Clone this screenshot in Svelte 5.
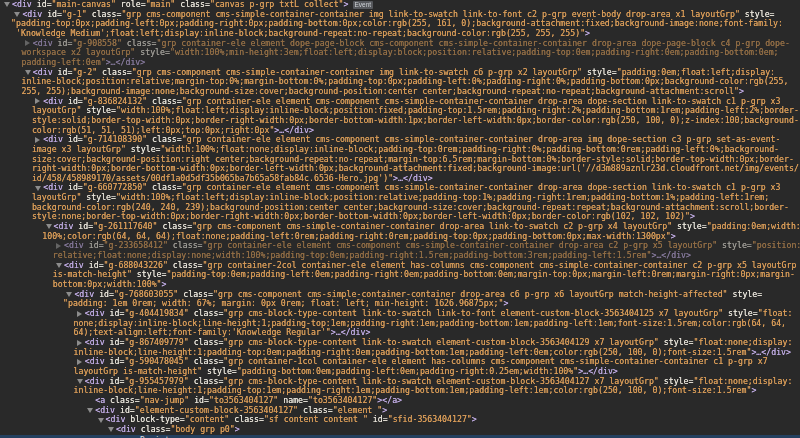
<script>
	// elements panel: each node is depth, arrow state and its wrapped lines
	const nodes = [
		{ d: 0, arrow: 'open', badge: 'Event', lines: [`<div id="main-canvas" role="main" class="canvas p-grp txtL collect">`] },
		{ d: 1, arrow: 'open', lines: [
			`<div id="g-1" class="grp cms-component cms-simple-container-container img link-to-swatch link-to-font c2 p-grp event-body drop-area x1 layoutGrp" style=`,
			`"padding-top:0px;padding-left:0px;padding-right:0px;padding-bottom:0px;color:rgb(255, 161, 0);background-attachment:fixed;background-image:none;font-family:`,
			` 'Knowledge Medium';float:left;display:inline-block;background-repeat:no-repeat;background-color:rgb(255, 255, 255)">`
		] },
		{ d: 2, arrow: 'closed', dim: true, lines: [
			`<div id="g-908558" class="grp container-ele element dope-page-block cms-component cms-simple-container-container drop-area dope-page-block c4 p-grp dope-`,
			`workspace x2 layoutGrp" style="width:100%;min-height:3em;float:left;display:block;position:relative;padding-top:0em;padding-right:0em;padding-bottom:0em;`,
			`padding-left:0em">…</div>`
		] },
		{ d: 2, arrow: 'open', lines: [
			`<div id="g-2" class="grp cms-component cms-simple-container-container img link-to-swatch c6 p-grp x2 layoutGrp" style="padding:0em;float:left;display:`,
			`inline-block;position:relative;margin-top:0%;margin-bottom:0%;padding-top:0px;padding-left:0%;padding-right:0%;padding-bottom:0px;background-color:rgb(255,`,
			`255, 255);background-image:none;background-size:cover;background-position:center center;background-repeat:no-repeat;background-attachment:scroll">`
		] },
		{ d: 3, arrow: 'closed', lines: [
			`<div id="g-836824132" class="grp container-ele element cms-component cms-simple-container-container drop-area dope-section link-to-swatch c1 p-grp x3`,
			`layoutGrp" style="width:100%;float:left;display:inline-block;position:fixed;padding-top:1.5rem;padding-right:2%;padding-bottom:1rem;padding-left:2%;border-`,
			`style:solid;border-top-width:0px;border-right-width:0px;border-bottom-width:1px;border-left-width:0px;border-color:rgb(250, 100, 0);z-index:100;background-`,
			`color:rgb(51, 51, 51);left:0px;top:0px;right:0px">…</div>`
		] },
		{ d: 3, arrow: 'closed', lines: [
			`<div id="g-714108390" class="grp container-ele element cms-component cms-simple-container-container drop-area img dope-section c3 p-grp set-as-event-`,
			`image x3 layoutGrp" style="width:100%;float:none;display:inline-block;padding-top:0rem;padding-right:0%;padding-bottom:0rem;padding-left:0%;background-`,
			`size:cover;background-position:right center;background-repeat:no-repeat;margin-top:6.5rem;margin-bottom:0%;border-style:solid;border-top-width:0px;border-`,
			`right-width:0px;border-bottom-width:0px;border-left-width:0px;background-attachment:fixed;background-image:url('//d3m889aznlr23d.cloudfront.net/img/events/`,
			`id/458/458989170/assets/00df1a0d5df35b065ba7b65a58fab84c.6536-Hero.jpg')">…</div>`
		] },
		{ d: 3, arrow: 'open', lines: [
			`<div id="g-660772850" class="grp container-ele element cms-component cms-simple-container-container drop-area dope-section link-to-swatch c1 p-grp x3`,
			`layoutGrp" style="width:100%;float:left;display:inline-block;position:relative;padding-top:1%;padding-right:1rem;padding-bottom:1%;padding-left:1rem;`,
			`background-color:rgb(240, 240, 239);background-position:center center;background-size:cover;background-repeat:repeat;background-attachment:scroll;border-`,
			`style:none;border-top-width:0px;border-right-width:0px;border-bottom-width:0px;border-left-width:0px;border-color:rgb(102, 102, 102)">`
		] },
		{ d: 4, arrow: 'open', lines: [
			`<div id="g-261117640" class="grp cms-component cms-simple-container-container drop-area link-to-swatch c2 p-grp x4 layoutGrp" style="padding:0em;width:`,
			`100%;color:rgb(64, 64, 64);float:none;padding-left:0rem;padding-right:0rem;padding-top:0px;padding-bottom:0px;max-width:1300px">`
		] },
		{ d: 5, arrow: 'closed', dim: true, lines: [
			`<div id="g-233658412" class="grp container-ele element cms-component cms-simple-container-container drop-area c2 p-grp x5 layoutGrp" style="position:`,
			`relative;float:none;display:none;width:100%;padding-top:0em;padding-right:1.5rem;padding-bottom:3rem;padding-left:1.5rem">…</div>`
		] },
		{ d: 5, arrow: 'open', lines: [
			`<div id="g-688043226" class="grp container-2col container-ele element has-columns cms-component cms-simple-container-container c2 p-grp x5 layoutGrp`,
			`is-match-height" style="padding-top:0em;padding-left:0em;padding-right:0em;padding-bottom:0em;margin-top:0px;margin-left:0rem;margin-right:0px;margin-`,
			`bottom:0px;width:100%">`
		] },
		{ d: 6, arrow: 'open', lines: [
			`<div id="g-768603055" class="grp cms-component cms-simple-container-container drop-area c6 p-grp x6 layoutGrp match-height-affected" style=`,
			`"padding: 1em 0rem; width: 67%; margin: 0px 0rem; float: left; min-height: 1626.96875px;">`
		] },
		{ d: 7, arrow: 'closed', lines: [
			`<div id="g-404419834" class="grp cms-block-type-content link-to-swatch link-to-font element-custom-block-3563404125 x7 layoutGrp" style="float:`,
			`none;display:inline-block;line-height:1;padding-top:1em;padding-right:1em;padding-bottom:1em;padding-left:1em;font-size:1.5rem;color:rgb(64, 64,`,
			`64);text-align:left;font-family:'Knowledge Regular'">…</div>`
		] },
		{ d: 7, arrow: 'closed', lines: [
			`<div id="g-867409779" class="grp cms-block-type-content link-to-swatch element-custom-block-3563404129 x7 layoutGrp" style="float:none;display:`,
			`inline-block;line-height:1;padding-top:0em;padding-right:0em;padding-bottom:1em;padding-left:0em;color:rgb(250, 100, 0);font-size:1.5rem">…</div>`
		] },
		{ d: 7, arrow: 'closed', lines: [
			`<div id="g-590478045" class="grp container-1col container-ele element has-columns cms-component cms-simple-container-container c1 p-grp x7`,
			`layoutGrp is-match-height" style="padding-bottom:0em;padding-left:0em;padding-right:0.25em;width:100%">…</div>`
		] },
		{ d: 7, arrow: 'open', lines: [
			`<div id="g-955457979" class="grp cms-block-type-content link-to-swatch element-custom-block-3563404127 x7 layoutGrp" style="float:none;display:`,
			`inline-block;line-height:1;padding-top:1em;padding-right:1em;padding-bottom:1em;padding-left:1em;color:rgb(250, 100, 0);font-size:1.5rem">`
		] },
		{ d: 8, lines: [`<a class="nav-jump" id="to3563404127" name="to3563404127"></a>`] },
		{ d: 8, arrow: 'open', lines: [`<div id="element-custom-block-3563404127" class="element ">`] },
		{ d: 9, arrow: 'open', lines: [`<div block-type="content" class="sf content content " id="sfid-3563404127">`] },
		{ d: 10, arrow: 'open', lines: [`<div class="body grp p0">`] }
	];

	const START = 12;
	const STEP = 10.4;
	const HANG = 11.3;

	// splits a node's lines into coloured pieces, quotes can run over several lines
	function tokenize(lines) {
		let inValue = false;
		return lines.map((line) => {
			const parts = [];
			let buf = '';
			let kind = inValue ? 'val' : 'attr';
			const flush = () => {
				if (buf) parts.push({ kind, text: buf });
				buf = '';
			};
			let i = 0;
			while (i < line.length) {
				const c = line[i];
				if (inValue) {
					kind = 'val';
					buf += c;
					if (c === '"') {
						flush();
						inValue = false;
						kind = 'attr';
					}
					i++;
				} else if (c === '"') {
					flush();
					kind = 'val';
					buf = c;
					inValue = true;
					i++;
				} else if (c === '<' || c === '>' || c === '…') {
					flush();
					const m = line.slice(i).match(/^(<\/?[a-z]+>?|>|…)/);
					kind = 'tag';
					buf = m[0];
					i += m[0].length;
					flush();
					kind = 'attr';
				} else {
					buf += c;
					i++;
				}
			}
			flush();
			return parts;
		});
	}

	const rows = nodes.flatMap((n) =>
		tokenize(n.lines).map((parts, idx) => ({
			parts,
			dim: n.dim,
			arrow: idx === 0 ? n.arrow : null,
			badge: idx === 0 ? n.badge : null,
			left: idx === 0 ? START + STEP * n.d : START + STEP * n.d - HANG
		}))
	);
</script>

<div class="panel">
	<div class="tree">
		{#each rows as row}
			<div class="row" class:dim={row.dim} style="padding-left:{row.left}px">
				{#if row.arrow}
					<span class="arrow {row.arrow}"></span>
				{/if}
				{#each row.parts as p}<span class={p.kind}>{p.text}</span>{/each}
				{#if row.badge}
					<span class="badge">{row.badge}</span>
				{/if}
			</div>
		{/each}
	</div>
	<div class="selected">
		<span class="cut">Register now</span>
	</div>
</div>

<style>
	:global(body) {
		margin: 0;
		background: #292929;
		overflow: hidden;
	}

	.panel {
		width: 800px;
		height: 438px;
		overflow: hidden;
		background: #292929;
		display: flex;
		flex-direction: column;
	}

	.tree {
		flex: none;
		font-family: "DejaVu Sans Mono", "Liberation Mono", monospace;
		font-size: 8.22px;
		filter: blur(0.3px);
	}

	.row {
		display: flex;
		height: 9.665px;
		line-height: 9.665px;
		white-space: pre;
		box-sizing: border-box;
		text-shadow: 0 0 0.6px currentColor;
	}

	.row.dim {
		opacity: 0.6;
	}

	.arrow {
		width: 0;
		height: 0;
		flex: none;
		align-self: center;
	}

	/* sits in the gutter left of the tag */
	.arrow.open {
		margin-left: -8px;
		margin-right: 2px;
		border-left: 3px solid transparent;
		border-right: 3px solid transparent;
		border-top: 5px solid #8c8c8c;
	}

	.arrow.closed {
		margin-left: -8px;
		margin-right: 3px;
		border-top: 3px solid transparent;
		border-bottom: 3px solid transparent;
		border-left: 5px solid #8c8c8c;
	}

	.tag {
		color: #bda9e0;
	}

	.attr {
		color: #e6e2d8;
	}

	.val {
		color: #d99c58;
	}

	.badge {
		margin-left: 4px;
		padding: 0 2px;
		height: 8px;
		line-height: 8px;
		align-self: center;
		background: #56585c;
		color: #cfd2d6;
		border-radius: 1px;
		font-family: "Liberation Sans", sans-serif;
		font-size: 6.5px;
		text-shadow: none;
	}

	.selected {
		flex: 1;
		background: #24405f;
		font-family: "DejaVu Sans Mono", "Liberation Mono", monospace;
		font-size: 8.22px;
		line-height: 9.665px;
		color: #dcdcdc;
		padding-left: 140px;
		padding-top: 1px;
		overflow: hidden;
	}
</style>
